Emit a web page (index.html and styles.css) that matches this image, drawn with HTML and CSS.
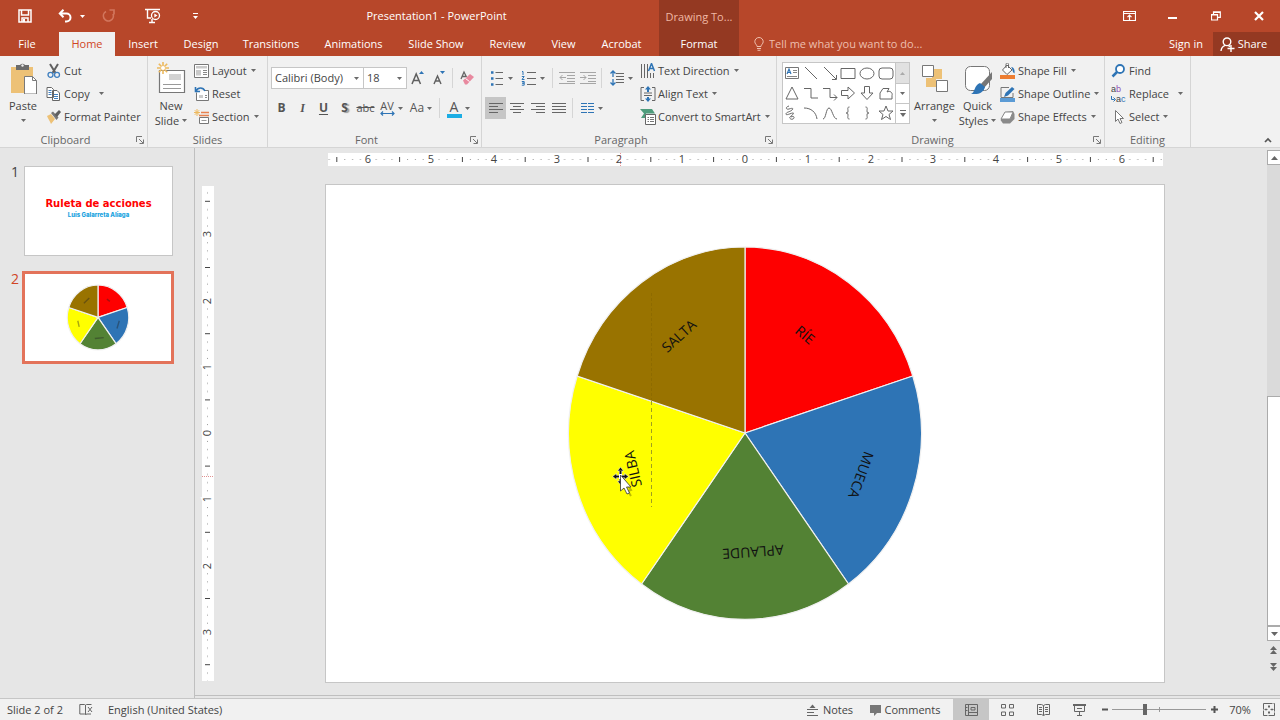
FILE: index.html
```html
<!DOCTYPE html>
<html lang="en">
<head>
<meta charset="utf-8">
<title>Presentation1 - PowerPoint</title>
<link rel="stylesheet" href="styles.css">
</head>
<body>
<svg class="defs" aria-hidden="true">
  <defs>
    <symbol id="caret" viewBox="0 0 5 3"><path d="M0 0h5L2.500 3z" fill="#6a6a6a"/></symbol>
    <symbol id="launch" viewBox="0 0 8 8"><path d="M.5 6V.5H6M3 3l4 4M7.500 3.500v4h-4" fill="none" stroke="#777"/></symbol>
    <g id="wheel" stroke="#f0f0f0" stroke-width="1.200">
      <path vector-effect="non-scaling-stroke" d="M745 433V247A176.500 186 0 0 1 912.800 376z" fill="#fe0000"/>
      <path vector-effect="non-scaling-stroke" d="M745 433L912.800 376A176.500 186 0 0 1 848.500 584z" fill="#2e74b5"/>
      <path vector-effect="non-scaling-stroke" d="M745 433L848.500 584A176.500 186 0 0 1 641.500 584z" fill="#538234"/>
      <path vector-effect="non-scaling-stroke" d="M745 433L641.500 584A176.500 186 0 0 1 577.200 376z" fill="#ffff00"/>
      <path vector-effect="non-scaling-stroke" d="M745 433L577.200 376A176.500 186 0 0 1 745 247z" fill="#997300"/>
    </g>
  </defs>
</svg>

<header class="top">
  <div class="titlebar">
    <div class="qat">
      <button class="tb" aria-label="Save"><svg width="14" height="14" viewBox="0 0 14 14"><path d="M1 1h12v12H1zM3.500 1v5h7V1M4 13V9h6v4" fill="none" stroke="#fff" stroke-width="1.500"/><path d="M5 10h2v3H5z" fill="#fff"/></svg></button>
      <button class="tb undo" aria-label="Undo"><svg width="14" height="14" viewBox="0 0 14 14"><path d="M2 4.500h6.500a4 4 0 0 1 0 8H7M5.500.8L1.800 4.500l3.700 3.700" fill="none" stroke="#fff" stroke-width="2"/></svg><svg width="5" height="3" viewBox="0 0 5 3"><path d="M0 0h5L2.500 3z" fill="#fff"/></svg></button>
      <button class="tb redo" aria-label="Redo"><svg width="14" height="14" viewBox="0 0 14 14"><path d="M4 2.500A5 5 0 1 0 11 5M7.500 1H12v4.500" fill="none" stroke="#d2765d" stroke-width="1.700"/></svg></button>
      <button class="tb show" aria-label="Start from beginning"><svg width="16" height="16" viewBox="0 0 16 16"><path d="M0 1.500h15M2.500 2v8H6M7 11v3M4 14.500h6" fill="none" stroke="#fff" stroke-width="1.400"/><circle cx="10.500" cy="7.500" r="4" fill="#b7472a" stroke="#fff" stroke-width="1.300"/><path d="M9.300 5.400v4.200l3.200-2.100z" fill="#fff"/></svg></button>
      <button class="tb more" aria-label="Customize"><svg width="5" height="6" viewBox="0 0 5 6"><path d="M0 0h5v1H0zM0 3h5L2.500 6z" fill="#fff"/></svg></button>
    </div>
    <h1 class="doc">Presentation1 - PowerPoint</h1>
    <div class="context">Drawing To...</div>
    <span></span>
    <div class="win">
      <button class="tb" aria-label="Ribbon options"><svg width="13" height="11" viewBox="0 0 13 11"><path d="M.5.500h12v9H.5zM.5 2.500h12M6.500 9V4.500M4.500 6.200l2-2 2 2" fill="none" stroke="#fff" stroke-width="1.200"/></svg></button>
      <button class="tb" aria-label="Minimize"><svg width="9" height="9" viewBox="0 0 9 9"><path d="M0 5h9v2H0z" fill="#fff"/></svg></button>
      <button class="tb" aria-label="Restore"><svg width="10" height="10" viewBox="0 0 10 10"><path d="M.5 3.500h6v5.500h-6zM.5 4h6M2.500 3V.8h6.800v5.500H7M2.500 1.500h7" fill="none" stroke="#fff" stroke-width="1.200"/></svg></button>
      <button class="tb" aria-label="Close"><svg width="10" height="10" viewBox="0 0 10 10"><path d="M1 1l8 8M9 1L1 9" stroke="#fff" stroke-width="2.200"/></svg></button>
    </div>
  </div>
  <nav class="tabs">
    <button>File</button><button class="active">Home</button><button>Insert</button><button>Design</button><button>Transitions</button><button>Animations</button><button>Slide Show</button><button>Review</button><button>View</button><button>Acrobat</button><span></span><button class="fmt">Format</button>
    <label class="tell"><svg width="10" height="14" viewBox="0 0 10 14"><path d="M3 9.500C3 7.500.8 7 .8 4.700a4.200 4.200 0 0 1 8.400 0C9.200 7 7 7.500 7 9.500zM3 11.500h4M3.500 13.300h3" fill="none" stroke="#eebfae"/></svg><input type="text" placeholder="Tell me what you want to do..." aria-label="Tell me what you want to do"></label>
    <button class="signin">Sign in</button>
    <button class="share"><svg width="15" height="15" viewBox="0 0 15 15"><circle cx="7" cy="4.800" r="3.800" fill="none" stroke="#fff" stroke-width="1.400"/><path d="M1 14c.3-2.800 1.800-4.800 4.200-5.600M8.500 8.600l1.500 1M7.500 11.500h7M11 8v7" fill="none" stroke="#fff" stroke-width="1.400"/></svg>Share</button>
  </nav>
</header>

<section class="ribbon">
  <div class="group clipboard">
    <div class="body">
      <button class="big"><svg width="30" height="32" viewBox="0 0 30 32"><path d="M3 5h22v26H3z" fill="#edc176"/><path d="M8 3h4a3 3 0 0 1 5 0h4v5H8z" fill="#6b6b6b"/><circle cx="14.500" cy="3.500" r="1.200" fill="#f1f1f1"/><path d="M16.500 14.500h8l4 4V32h-12z" fill="#fff" stroke="#7a7a7a"/><path d="M24.500 14.500v4h4" fill="none" stroke="#7a7a7a"/></svg><span>Paste</span><svg class="caret"><use href="#caret"/></svg></button>
      <div class="col">
        <button class="row"><svg width="16" height="16" viewBox="0 0 16 16"><path d="M4 1l5.500 9M12 1L6.500 10" stroke="#606060" stroke-width="2" fill="none"/><circle cx="4.500" cy="11.800" r="2.500" fill="none" stroke="#3f7fbf" stroke-width="1.300"/><circle cx="11" cy="11.800" r="2.500" fill="none" stroke="#3f7fbf" stroke-width="1.300"/></svg>Cut</button>
        <button class="row"><svg width="16" height="16" viewBox="0 0 16 16"><path d="M1 1.500h4.500l2 2v8H1zM6.500 4.500H11l2.500 2.500v7.500h-7z" fill="#fff" stroke="#666"/><path d="M2.500 4.500h3M2.500 6.500h3M2.500 8.500h3M8 8.500h4M8 10.500h4M8 12.500h4" stroke="#3f7fbf"/></svg>Copy<svg class="caret far"><use href="#caret"/></svg></button>
        <button class="row"><svg width="16" height="16" viewBox="0 0 16 16"><path d="M1 7l4-2 4 5-4 5C4 12 2 10 1 7z" fill="#edc176"/><path d="M5 4l2-1.500 5.500 6L10.500 11z" fill="#777"/><path d="M8.500 5.500L13 1l2 2-4 5z" fill="#5f5f5f"/></svg>Format Painter</button>
      </div>
    </div>
    <div class="label">Clipboard</div><button class="launch" aria-label="Clipboard options"><svg width="8" height="8"><use href="#launch"/></svg></button>
  </div>

  <div class="group slides">
    <div class="body">
      <button class="big"><svg width="30" height="32" viewBox="0 0 30 32"><path d="M3.500 8.500h25v22h-25z" fill="#fff" stroke="#777" stroke-width="1.200"/><path d="M13 12h12v6H13z" fill="#d2d2d2"/><path d="M7 22.500h18M7 26.500h18" stroke="#999"/><path d="M7 0v12M1 6h12M2.800 1.800l8.400 8.400M11.200 1.800l-8.400 8.400" stroke="#edb95e" stroke-width="1.600"/><circle cx="7" cy="6" r="2" fill="#fff"/></svg><span>New</span><span>Slide<svg class="caret"><use href="#caret"/></svg></span></button>
      <div class="col">
        <button class="row"><svg width="16" height="16" viewBox="0 0 16 16"><path d="M.5 1.500h14v13H.5z" fill="#fff" stroke="#777"/><path d="M2 3h11v2.500H2zM2 7h5v5.500H2z" fill="#c9c9c9"/><path d="M9 7.500h4M9 9.500h4M9 11.500h4" stroke="#888"/></svg>Layout<svg class="caret"><use href="#caret"/></svg></button>
        <button class="row"><svg width="16" height="16" viewBox="0 0 16 16"><path d="M2.500 6.500V14.500h12v-10H10" fill="#fff" stroke="#777"/><path d="M5 9h4v3H5z" fill="#ccc"/><path d="M11 9.500h2M11 11.500h2" stroke="#888"/><path d="M2 5c2-4 7-4 9 0M1.500 1v4.500H6" fill="none" stroke="#2e74b5" stroke-width="1.600"/></svg>Reset</button>
        <button class="row"><svg width="16" height="16" viewBox="0 0 16 16"><path d="M7 3.500h8M5 6.500h10" stroke="#e8814e" stroke-width="1.500"/><path d="M5.500 8.500h9v6h-9z" fill="#fff" stroke="#777"/><path d="M7.500 11.500h5" stroke="#999"/><path d="M3 0v7M0 3.500h6M.8 1.200l4.400 4.600M5.200 1.200L.8 5.800" stroke="#edb95e"/></svg>Section<svg class="caret"><use href="#caret"/></svg></button>
      </div>
    </div>
    <div class="label">Slides</div>
  </div>

  <div class="group font">
    <div class="body lines">
      <div class="line">
        <div class="combo name"><select aria-label="Font"><option>Calibri (Body)</option></select><svg class="caret"><use href="#caret"/></svg></div>
        <div class="combo size"><select aria-label="Font size"><option>18</option></select><svg class="caret"><use href="#caret"/></svg></div>
        <button class="t" aria-label="Increase font size"><svg width="14" height="16" viewBox="0 0 14 16"><path d="M1 14L5.200 4 9.500 14M2.500 10.500h5.500" fill="none" stroke="#5f5f5f" stroke-width="1.500"/><path d="M8 4h5l-2.500-3z" fill="#2e74b5"/></svg></button>
        <button class="t" aria-label="Decrease font size"><svg width="14" height="16" viewBox="0 0 14 16"><path d="M2 14L5.500 6 9 14M3.200 11h4.600" fill="none" stroke="#5f5f5f" stroke-width="1.400"/><path d="M8 1h5l-2.500 3z" fill="#2e74b5"/></svg></button>
        <i class="sep"></i>
        <button class="t" aria-label="Clear formatting"><svg width="16" height="16" viewBox="0 0 16 16"><path d="M2 9L5 2l2.500 5M3 6.500h4" fill="none" stroke="#666" stroke-width="1.300"/><path d="M4 10.500L11 4l4 3-7 7.500H6z" fill="#e8899f"/><path d="M6.500 8.500l4 3" stroke="#fff"/></svg></button>
      </div>
      <div class="line">
        <button class="t b">B</button><button class="t i">I</button><button class="t u">U</button><button class="t s">S</button><button class="t abc">abc</button>
        <button class="t w"><span class="av">AV<svg width="15" height="5" viewBox="0 0 15 5"><path d="M1 2.500h13M3 .5l-2 2 2 2M12 .5l2 2-2 2" fill="none" stroke="#2e74b5" stroke-width="1.200"/></svg></span><svg class="caret"><use href="#caret"/></svg></button>
        <button class="t w aa">Aa<svg class="caret"><use href="#caret"/></svg></button>
        <i class="sep"></i>
        <button class="t w"><span class="fc">A</span><svg class="caret"><use href="#caret"/></svg></button>
      </div>
    </div>
    <div class="label">Font</div><button class="launch" aria-label="Font options"><svg width="8" height="8"><use href="#launch"/></svg></button>
  </div>

  <div class="group para">
    <div class="body">
      <div class="lines">
        <div class="line">
          <button class="t w" aria-label="Bullets"><svg width="14" height="16" viewBox="0 0 14 16"><path d="M5.500 2.500H13M5.500 8.500H13M5.500 14.500H13" stroke="#666"/><path d="M1 1.200h2.500v2.500H1zM1 7.200h2.500v2.500H1zM1 13.200h2.500v2.500H1z" fill="#2e74b5"/></svg><svg class="caret"><use href="#caret"/></svg></button>
          <button class="t w" aria-label="Numbering"><svg width="15" height="16" viewBox="0 0 15 16"><path d="M6 2.500h9M6 8.500h9M6 14.500h9" stroke="#666"/><path d="M1 1.500h1V5M.8 6.500h2.400L1 9.500h2.500M.8 11.500h2.400v1.700h-2 2v2H.8" fill="none" stroke="#2e74b5"/></svg><svg class="caret"><use href="#caret"/></svg></button>
          <i class="sep"></i>
          <button class="t" aria-label="Decrease indent"><svg width="16" height="14" viewBox="0 0 16 14"><path d="M0 1.500h16M8 4.500h8M8 7.500h8M8 10.500h8M0 12.500h16M1 6.500h6M3.500 4L1 6.500 3.500 9" fill="none" stroke="#a6a6a6"/></svg></button>
          <button class="t" aria-label="Increase indent"><svg width="16" height="14" viewBox="0 0 16 14"><path d="M0 1.500h16M8 4.500h8M8 7.500h8M8 10.500h8M0 12.500h16M0 6.500h6M3.500 4L6 6.500 3.500 9" fill="none" stroke="#a6a6a6"/></svg></button>
          <i class="sep"></i>
          <button class="t w" aria-label="Line spacing"><svg width="14" height="16" viewBox="0 0 14 16"><path d="M6 3.500h8M6 6.500h8M6 9.500h8M6 12.500h8" stroke="#666"/><path d="M3 1v6M.5 3.500L3 1l2.500 2.500M3 9v6M.5 12.500L3 15l2.500-2.500" fill="none" stroke="#2e74b5" stroke-width="1.300"/></svg><svg class="caret"><use href="#caret"/></svg></button>
        </div>
        <div class="line">
          <button class="t on" aria-label="Align left"><svg width="14" height="12" viewBox="0 0 14 12"><path d="M0 1.500h14M0 4.500h9M0 7.500h14M0 10.500h9" stroke="#666"/></svg></button>
          <button class="t" aria-label="Center"><svg width="14" height="12" viewBox="0 0 14 12"><path d="M0 1.500h14M3 4.500h8M0 7.500h14M3 10.500h8" stroke="#666"/></svg></button>
          <button class="t" aria-label="Align right"><svg width="14" height="12" viewBox="0 0 14 12"><path d="M0 1.500h14M5 4.500h9M0 7.500h14M5 10.500h9" stroke="#666"/></svg></button>
          <button class="t" aria-label="Justify"><svg width="14" height="12" viewBox="0 0 14 12"><path d="M0 1.500h14M0 4.500h14M0 7.500h14M0 10.500h14" stroke="#666"/></svg></button>
          <i class="sep"></i>
          <button class="t w" aria-label="Columns"><svg width="13" height="12" viewBox="0 0 13 12"><path d="M0 1.500h6M0 4.500h6M0 7.500h6M0 10.500h6M7 1.500h6M7 4.500h6M7 7.500h6M7 10.500h6" stroke="#2e74b5"/></svg><svg class="caret"><use href="#caret"/></svg></button>
        </div>
      </div>
      <div class="col">
        <button class="row"><svg width="16" height="16" viewBox="0 0 16 16"><path d="M1.500 1v14M4.500 1v14M7.500 1v14M7.500 10v5M10.500 10v5M13.500 10v5" stroke="#666"/><path d="M8.500 8l3-7.500 3 7.500M9.500 5.500h4" fill="none" stroke="#2e74b5" stroke-width="1.500"/></svg>Text Direction<svg class="caret"><use href="#caret"/></svg></button>
        <button class="row"><svg width="16" height="16" viewBox="0 0 16 16"><path d="M4 1.500H1v13h3M12 1.500h3v13h-3M4 7h8M4 9.500h8" fill="none" stroke="#666"/><path d="M8 0l3 3.500H9V6H7V3.500H5zM8 16l3-3.500H9V11H7v1.500H5z" fill="#2e74b5"/></svg>Align Text<svg class="caret"><use href="#caret"/></svg></button>
        <button class="row"><svg width="16" height="16" viewBox="0 0 16 16"><path d="M0 0h12l3 4.500h-9V9H1l3-4.500z" fill="#4f9c7c"/><path d="M5.500 5.500h10v10h-10z" fill="#fff" stroke="#666"/><path d="M7.500 8.500h1.500M10 8.500h4M7.500 10.500h1.500M10 10.500h4M7.500 12.500h1.500M10 12.500h4" stroke="#777"/></svg>Convert to SmartArt<svg class="caret"><use href="#caret"/></svg></button>
      </div>
    </div>
    <div class="label">Paragraph</div><button class="launch" aria-label="Paragraph options"><svg width="8" height="8"><use href="#launch"/></svg></button>
  </div>

  <div class="group draw">
    <div class="body">
      <div class="gallery">
        <div class="shapes">
          <svg viewBox="0 0 16 16"><path d="M1.500 2.500h13v11h-13z" fill="#fff" stroke="#777"/><path d="M3 9l2-5 2 5M3.500 7.500h3" fill="none" stroke="#2e74b5" stroke-width="1.200"/><path d="M9 5.500h4M9 7.500h4M3 11.500h10" stroke="#888"/></svg>
          <svg viewBox="0 0 16 16"><path d="M2 2l12 12"/></svg>
          <svg viewBox="0 0 16 16"><path d="M2 2l12 12M14.500 10v4.500H10"/></svg>
          <svg viewBox="0 0 16 16"><path d="M1 3.500h14v10H1z"/></svg>
          <svg viewBox="0 0 16 16"><ellipse cx="8" cy="8.500" rx="7" ry="5.500"/></svg>
          <svg viewBox="0 0 16 16"><rect x="1" y="3" width="14" height="11" rx="3"/></svg>
          <svg viewBox="0 0 16 16"><path d="M8 2l6 12H2z"/></svg>
          <svg viewBox="0 0 16 16"><path d="M1 3.500h7v9.500h7"/></svg>
          <svg viewBox="0 0 16 16"><path d="M1 3.500h7v9h7M12 9.500l3 3-3 3"/></svg>
          <svg viewBox="0 0 16 16"><path d="M1.500 5.500H8V2l6.500 6L8 14v-3.500H1.500z"/></svg>
          <svg viewBox="0 0 16 16"><path d="M5.500 1.500h5V8H14l-6 6.500L2 8h3.500z"/></svg>
          <svg viewBox="0 0 16 16"><path d="M5 3.500h6L9 7c3-2 6 1 5 3.500v3.500H2V8z"/></svg>
          <svg viewBox="0 0 16 16"><path d="M5 1c-4 1-3 4 0 3s5-1 3 1-6 2-6 4 5-1 7-1-2 3-3 4 1 3 3 2 1-4-2-2"/></svg>
          <svg viewBox="0 0 16 16"><path d="M1 3c7 0 12 4 13 11"/></svg>
          <svg viewBox="0 0 16 16"><path d="M1 14C4 14 4 3 7 3s4 11 8 11"/></svg>
          <svg viewBox="0 0 16 16"><path d="M9.500 2C7 2 8 4 8 6s-1 2-2 2c1 0 2 0 2 2s-1 4 1.500 4"/></svg>
          <svg viewBox="0 0 16 16"><path d="M6.500 2C9 2 8 4 8 6s1 2 2 2c-1 0-2 0-2 2s1 4-1.500 4"/></svg>
          <svg viewBox="0 0 16 16"><path d="M8 1l2 5h5l-4 3.500 1.500 5L8 11.500l-4.500 3 1.500-5L1 6h5z"/></svg>
        </div>
        <div class="side"><button class="off" aria-label="Scroll up"><svg width="5" height="3" viewBox="0 0 5 3"><path d="M0 3h5L2.500 0z" fill="#aaa"/></svg></button><button aria-label="Scroll down"><svg class="caret"><use href="#caret"/></svg></button><button aria-label="More shapes"><svg width="6" height="7" viewBox="0 0 6 7"><path d="M0 0h6v1H0zM0 3h6L3 7z" fill="#6a6a6a"/></svg></button></div>
      </div>
      <button class="big"><svg width="30" height="32" viewBox="0 0 30 32"><path d="M12 7h10v10H12zM6 16h10v9H6z" fill="#edc176"/><path d="M2.500 3.500h11v11h-11zM16.500 18.500h11v11h-11z" fill="#fff" stroke="#777"/></svg><span>Arrange</span><svg class="caret"><use href="#caret"/></svg></button>
      <button class="big"><svg width="30" height="32" viewBox="0 0 30 32"><rect x="2.500" y="4.500" width="24" height="24" rx="5" fill="#fff" stroke="#777"/><path d="M29 10v7l-8 9-4-3z" fill="#777"/><path d="M17 21l5 4c-1 5-6 8-14 7 4-1 3-9 9-11z" fill="#2e74b5"/></svg><span>Quick</span><span>Styles<svg class="caret"><use href="#caret"/></svg></span></button>
      <div class="col">
        <button class="row"><svg width="16" height="16" viewBox="0 0 16 16"><path d="M7 2l5 5-5 4.500L2.500 7zM6 5V1.500C6-.5 8.500-.5 8.500 1.500V5" fill="#fff" stroke="#666"/><path d="M11 4c3 0 4 3 3.500 6.500C12 9 13 6 11 4z" fill="#2e74b5"/><path d="M0 12h15v4H0z" fill="#ed7d31"/></svg>Shape Fill<svg class="caret"><use href="#caret"/></svg></button>
        <button class="row"><svg width="16" height="16" viewBox="0 0 16 16"><path d="M9 1.500H1v10h12V7" fill="none" stroke="#777"/><path d="M12 1l2.500 2L8 9.500 4 11l1.500-4z" fill="#2e74b5"/><path d="M0 12h15v4H0z" fill="#5b9bd5"/></svg>Shape Outline<svg class="caret"><use href="#caret"/></svg></button>
        <button class="row"><svg width="16" height="16" viewBox="0 0 16 16"><path d="M5 3l8-1 1.500 3v5L10 14.500H3L.5 11z" fill="#8a8a8a"/><path d="M5 3h8l-3 7H1z" fill="#fff" stroke="#8a8a8a"/></svg>Shape Effects<svg class="caret"><use href="#caret"/></svg></button>
      </div>
    </div>
    <div class="label">Drawing</div><button class="launch" aria-label="Drawing options"><svg width="8" height="8"><use href="#launch"/></svg></button>
  </div>

  <div class="group edit">
    <div class="body">
      <div class="col">
        <button class="row"><svg width="16" height="16" viewBox="0 0 16 16"><circle cx="9" cy="6" r="4" fill="#fff" stroke="#2e74b5" stroke-width="1.800"/><path d="M6 9l-4.500 4.500" stroke="#2e74b5" stroke-width="2.500"/></svg>Find</button>
        <button class="row"><span class="ab"><span class="top-ab">a<b>b</b></span><span class="low-ac"><svg width="5" height="6" viewBox="0 0 5 6"><path d="M.5 0v3.500h3M2.500 1.500l2 2-2 2" fill="none" stroke="#2e74b5"/></svg>a<b>c</b></span></span>Replace<svg class="caret far"><use href="#caret"/></svg></button>
        <button class="row"><svg width="16" height="16" viewBox="0 0 16 16"><path d="M4.500 1.500v11L7 10l2 4.500 2-1L9 9.500h3.500z" fill="#fff" stroke="#777"/></svg>Select<svg class="caret"><use href="#caret"/></svg></button>
      </div>
    </div>
    <div class="label">Editing</div>
  </div>
  <button class="collapse" aria-label="Collapse ribbon"><svg width="8" height="6" viewBox="0 0 8 6"><path d="M1 5l3-3 3 3" fill="none" stroke="#555" stroke-width="1.700"/></svg></button>
</section>

<main class="work">
  <aside class="thumbs">
    <div class="thumb"><span class="num">1</span><div class="mini first"><strong>Ruleta de acciones</strong><small>Luis Galarreta Aliaga</small></div></div>
    <div class="thumb sel"><span class="num">2</span><div class="mini"><svg viewBox="326 185 838 497"><use href="#wheel"/><g stroke="#222" stroke-opacity=".4" stroke-width="8" fill="none"><path d="M664 351l31-30M796 328l17 13M867 452l-13 45M778 549l-51 5M637 487l-8-35"/></g></svg></div></div>
  </aside>
  <section class="editor">
    <svg class="hr" viewBox="328 153 835 13">
      <defs><pattern id="hp" patternUnits="userSpaceOnUse" x="745" y="153" width="62.800" height="13"><path d="M7.500 6h1v1h-1zM15.500 6h1v1h-1zM23.300 6h1v1h-1zM38.900 6h1v1h-1zM46.700 6h1v1h-1zM54.500 6h1v1h-1z" fill="#999"/><path d="M30.900 4h1v5h-1z" fill="#444"/></pattern></defs>
      <rect x="328" y="153" width="835" height="13" fill="#fff"/><rect x="328" y="153" width="835" height="13" fill="url(#hp)"/>
      <g class="rn"><text x="368" y="163">6</text><text x="431" y="163">5</text><text x="494" y="163">4</text><text x="557" y="163">3</text><text x="619" y="163">2</text><text x="682" y="163">1</text><text x="745" y="163">0</text><text x="808" y="163">1</text><text x="871" y="163">2</text><text x="933" y="163">3</text><text x="996" y="163">4</text><text x="1059" y="163">5</text><text x="1122" y="163">6</text></g>
      <path d="M620.500 153v13" stroke="#e05050" stroke-opacity=".6" stroke-dasharray="1 1"/>
    </svg>
    <svg class="vr" viewBox="202 186 13 495">
      <defs><pattern id="vp" patternUnits="userSpaceOnUse" x="202" y="433" width="13" height="66.200"><path d="M5 7.800h1v1H5zM5 16h1v1H5zM5 24.300h1v1H5zM5 40.900h1v1H5zM5 49.200h1v1H5zM5 57.400h1v1H5z" fill="#999"/><path d="M3 32.600h5v1H3z" fill="#444"/></pattern></defs>
      <rect x="202" y="186" width="12" height="495" fill="#fff"/><rect x="202" y="186" width="12" height="495" fill="url(#vp)"/>
      <path d="M202 476.500h12" stroke="#e09090" stroke-dasharray="1 1"/>
      <g class="rn"><text transform="translate(211 234) rotate(-90)">3</text><text transform="translate(211 301) rotate(-90)">2</text><text transform="translate(211 367) rotate(-90)">1</text><text transform="translate(211 433) rotate(-90)">0</text><text transform="translate(211 499) rotate(-90)">1</text><text transform="translate(211 566) rotate(-90)">2</text><text transform="translate(211 632) rotate(-90)">3</text></g>
    </svg>
    <div class="slide">
      <svg viewBox="326 185 838 497">
        <use href="#wheel"/>
        <path d="M651.500 293v107" stroke="#8e6b00" stroke-dasharray="3 2"/>
        <path d="M651.500 401v106" stroke="#a0a020" stroke-dasharray="4 3"/>
        <g class="wt">
          <text transform="translate(679 336) rotate(-42)" y="5">SALTA</text>
          <text transform="translate(805 335) rotate(40)" y="5">RÍE</text>
          <text transform="translate(861 475) rotate(110)" y="5">MUECA</text>
          <text transform="translate(753 552) rotate(176)" y="5">APLAUDE</text>
          <text transform="translate(633 469) rotate(-103)" y="5">SILBA</text>
        </g>
        <path d="M620.500 470v13M614 476.500h13" stroke="#fff" stroke-width="3"/>
        <path d="M620.500 467l3 4h-6zM620.500 485l3-4h-6zM612.500 476.500l4-3v6zM628.500 476.500l-4-3v6z" fill="#111" stroke="#fff" stroke-width=".5"/>
        <path d="M620.500 471v3M616 476.500h3M622 476.500h3M620.500 479v3" stroke="#111" stroke-width="2"/>
        <path d="M624 480l7 10-3 1 3 5" fill="none" stroke="#7a7a00" stroke-opacity=".5" stroke-width="2"/>
        <path d="M620.500 475v16l3.500-3 3 6 2.500-1-3-6h4.500z" fill="#fff" stroke="#333" stroke-width=".8"/>
      </svg>
    </div>
  </section>
  <div class="scroll">
    <button class="sb" aria-label="Up"><svg width="7" height="4" viewBox="0 0 7 4"><path d="M0 4h7L3.500 0z" fill="#666"/></svg></button>
    <div class="track"></div>
    <div class="handle"></div>
    <button class="sb" aria-label="Down"><svg width="7" height="4" viewBox="0 0 7 4"><path d="M0 0h7L3.500 4z" fill="#666"/></svg></button>
    <button class="pg" aria-label="Previous slide"><svg width="7" height="8" viewBox="0 0 7 8"><path d="M0 4h7L3.500 0zM0 8h7L3.500 4z" fill="#666"/></svg></button>
    <button class="pg" aria-label="Next slide"><svg width="7" height="8" viewBox="0 0 7 8"><path d="M0 0h7L3.500 4zM0 4h7L3.500 8z" fill="#666"/></svg></button>
  </div>
</main>

<footer class="status">
  <span class="count">Slide 2 of 2</span>
  <button aria-label="Spelling"><svg width="14" height="13" viewBox="0 0 14 13"><path d="M6.500 2v9.500L5.500 11H.8V1.500h4.700l1 .7 1-.7H9M6.500 11.500l1.500-.5h4M9 4l4 5M13 4L9 9M9 1.500h3.500" fill="none" stroke="#666"/></svg></button>
  <button class="lang">English (United States)</button>
  <div class="right">
    <button class="notes"><svg width="11" height="12" viewBox="0 0 11 12"><path d="M0 5.500h11M0 8.500h7M0 11.500h11" stroke="#666"/><path d="M2.500 4h6l-3-3.500z" fill="#666"/></svg>Notes</button>
    <button class="comments"><svg width="11" height="12" viewBox="0 0 11 12"><path d="M0 1h11v8H7l-3 3V9H0z" fill="#777"/></svg>Comments</button>
    <button class="view on" aria-label="Normal"><svg width="13" height="12" viewBox="0 0 13 12"><path d="M.5.500h12v11H.5zM3.500.500v11M3.500 8.500h9M6 3.500h4v2.500H6zM1 3.500h1.500M1 6.500h1.500" fill="none" stroke="#666"/></svg></button>
    <button class="view" aria-label="Slide sorter"><svg width="13" height="12" viewBox="0 0 13 12"><path d="M.5.500h4v3.500h-4zM8.500.500h4v3.500h-4zM.5 8h4v3.500h-4zM8.500 8h4v3.500h-4z" fill="none" stroke="#666"/></svg></button>
    <button class="view" aria-label="Reading view"><svg width="13" height="12" viewBox="0 0 13 12"><path d="M6.500 1.500v10M.5.500h4l2 1 2-1h4v10h-4l-2 1-2-1h-4zM2 3.500h3M2 5.500h3M2 7.500h3M8 3.500h3M8 5.500h3M8 7.500h3" fill="none" stroke="#666"/></svg></button>
    <button class="view" aria-label="Slide show"><svg width="13" height="12" viewBox="0 0 13 12"><path d="M0 1h13" stroke="#666" stroke-width="2"/><path d="M1.500 2v5.500h10V2M4 4.500h5M6.500 7.500v4M4 11.500h5" fill="none" stroke="#666"/></svg></button>
    <button class="zb" aria-label="Zoom out"><svg width="7" height="7" viewBox="0 0 7 7"><path d="M1 2.500h6v2H1z" fill="#555"/></svg></button>
    <input class="zoom" type="range" min="0" max="100" value="34" aria-label="Zoom">
    <button class="zb" aria-label="Zoom in"><svg width="7" height="7" viewBox="0 0 7 7"><path d="M0 2.500h7v2H0zM2.500 0h2v7h-2z" fill="#555"/></svg></button>
    <button class="pct">70%</button>
    <button class="fit" aria-label="Fit slide"><svg width="12" height="13" viewBox="0 0 12 13"><path d="M.5.500h11v12H.5z" fill="none" stroke="#666" stroke-dasharray="9 1"/><path d="M6 2v3M6 8v3M1.500 6.500h3M7.500 6.500h3M5 3.500h2M5 9.500h2M3 5.500v2M9 5.500v2" stroke="#666"/></svg></button>
  </div>
</footer>
</body>
</html>
```
FILE: styles.css
```css
* { box-sizing: border-box; }
body {
  margin: 0;
  min-height: 100vh;
  display: flex;
  flex-direction: column;
  background: #e6e6e6;
  color: #444;
  font: 11px/16px "Open Sans", "Noto Sans", sans-serif;
  overflow: hidden;
}
button, input, select { font: inherit; color: inherit; border: 0; padding: 0; margin: 0; background: none; }
button { display: flex; align-items: center; justify-content: center; white-space: nowrap; }
svg { display: block; flex: none; }
.defs { position: absolute; width: 0; height: 0; }
.caret { width: 5px; height: 3px; }

/* title bar and tabs */
.top { background: #b7472a; color: #fff; }
.titlebar { display: grid; grid-template-columns: 214px 445px 80px 1fr auto; height: 32px; align-items: center; }
.qat { display: flex; align-items: center; padding-left: 18px; height: 30px; }
.undo { margin-left: 26px; gap: 8px; }
.redo { margin-left: 17px; }
.show { margin-left: 29px; }
.more { margin-left: 32px; }
.doc { margin: 0; font-size: 11px; font-weight: 400; text-align: center; }
.context { background: #943922; height: 32px; line-height: 34px; text-align: center; color: #f0b8a4; }
.win { display: grid; grid-template-columns: repeat(4, 43px); height: 30px; }
.tabs {
  display: grid;
  grid-template-columns: 59px 56px 56px 60px 80px 85px 80px 63px 49px 67px 4px 80px 1fr 54px 67px;
  height: 24px;
}
.tabs > button:first-child { padding-right: 5px; }
.tabs .active { background: #f1f1f1; color: #d04525; }
.tabs .fmt { background: #943922; }
.tell { display: flex; align-items: center; gap: 5px; padding-left: 15px; }
.tell input { width: 200px; outline: 0; }
.tell input::placeholder { color: #eebfae; opacity: 1; }
.share { background: #943922; gap: 3px; padding-right: 6px; }

/* ribbon */
.ribbon { display: flex; height: 92px; background: #f1f1f1; border-bottom: 1px solid #d5d5d5; }
.group {
  display: grid;
  grid-template: 73px 16px / 1fr 14px;
  padding-top: 3px;
  border-right: 1px solid #d5d5d5;
}
.body { grid-column: 1 / 3; display: flex; }
.label { grid-column: 1 / 3; grid-row: 2; text-align: center; color: #666; }
.group .label { padding-right: 16px; }
.launch { grid-column: 2; grid-row: 2; }
.slides .label, .edit .label { padding-right: 0; }
.clipboard { width: 148px; }
.slides { width: 120px; }
.font { width: 214px; }
.para { width: 295px; }
.draw { width: 328px; }
.edit { width: 86px; }
.big { flex-direction: column; width: 46px; justify-content: flex-start; padding-top: 3px; }
.big span { display: flex; align-items: center; gap: 3px; line-height: 15px; }
.big > svg:first-child { margin-bottom: 4px; }
.big > .caret { margin-top: 6px; }
.col { display: grid; grid-template-rows: repeat(3, 23px); }
.row { justify-content: flex-start; gap: 2px; }
.row .caret { margin-left: 2px; }
.row .caret.far { margin-left: 7px; }
.lines { display: grid; grid-template-rows: 30px 30px; padding-top: 4px; align-content: start; }
.line { display: flex; align-items: center; }
.font .lines { padding-left: 3px; }
.combo { display: flex; align-items: center; height: 22px; background: #fff; border: 1px solid #c6c6c6; padding-right: 4px; }
.combo select { appearance: none; flex: 1; min-width: 0; padding-left: 3px; outline: 0; }
.combo.name { width: 93px; }
.combo.size { width: 43px; border-left: 0; }
.t { width: 21px; height: 22px; color: #555; }
.t.w { width: 32px; gap: 4px; }
.font .t.w { width: 30px; gap: 3px; }
.sep { width: 1px; height: 20px; background: #d5d5d5; margin: 0 3px; }
.b, .u, .s, .i { font-size: 12px; font-weight: 700; }
.i { font-family: "Liberation Serif", serif; font-style: italic; }
.u { text-decoration: underline; text-underline-offset: 2px; }
.s { text-shadow: 2px 1px 1px #999; }
.abc { text-decoration: line-through; }
.av { display: grid; line-height: 11px; font-size: 11px; justify-items: center; }
.aa { font-size: 12px; }
.fc { font-size: 14px; line-height: 15px; width: 15px; border-bottom: 4px solid #1cade4; }
.on { background: #c6c6c6; }
.para .lines { width: 158px; padding-left: 3px; }
.gallery { display: flex; width: 128px; height: 62px; margin: 3px 0 0 5px; border: 1px solid #c6c6c6; background: #fff; }
.shapes { flex: 1; display: grid; grid-template: repeat(3, 20px) / repeat(6, 1fr); place-items: center; }
.shapes svg { width: 16px; height: 16px; fill: none; stroke: #666; }
.side { width: 14px; display: grid; grid-template-rows: repeat(3, 20px); border-left: 1px solid #c6c6c6; }
.side button + button { border-top: 1px solid #c6c6c6; }
.side .off { background: #e1e1e1; }
.draw .big { width: 43px; }
.draw .big:nth-of-type(1) { margin-left: 3px; }
.draw .col { margin-left: 1px; }
.edit .body { padding-left: 6px; }
.ab { width: 16px; font: 9px/10px "Liberation Sans", sans-serif; }
.ab span { display: flex; align-items: center; }
.ab b { color: #9152b5; font-weight: 400; }
.low-ac b { color: #2e74b5; }
.collapse { margin: auto 8px 4px auto; }

/* workspace */
.work { flex: 1; display: grid; grid-template-columns: 195px 1fr 13px; }
.thumbs { border-right: 1px solid #bfbfbf; padding-top: 18px; }
.thumb { display: flex; gap: 5px; padding-left: 11px; margin-bottom: 15px; }
.num { width: 8px; font-size: 14px; line-height: 12px; }
.mini { width: 149px; height: 90px; background: #fff; border: 1px solid #c6c6c6; }
.first { display: grid; align-content: center; justify-items: center; padding-bottom: 4px; }
.first strong { font: 700 10px/12px "DejaVu Sans", sans-serif; color: #f00; white-space: nowrap; }
.first small { font: 800 6px/10px Inter, sans-serif; color: #1aa3e0; }
.sel { gap: 3px; }
.sel .num { color: #d04525; line-height: 16px; }
.sel .mini { width: 152px; height: 93px; border: 3px solid #e3735a; }
.sel .mini svg { width: 100%; height: 100%; }
.editor {
  display: grid;
  grid-template: 13px auto / 13px 1fr;
  align-content: start;
  gap: 18px 110px;
  padding: 5px 102px 0 7px;
  border-bottom: 1px solid #bfbfbf;
  margin-bottom: 2px;
}
.hr { grid-column: 2; margin: 0 2px 0 3px; overflow: visible; }
.vr { margin-top: 2px; height: 495px; width: 13px; overflow: visible; }
.rn { font-size: 11px; text-anchor: middle; fill: #444; }
.rn text { stroke: #fff; stroke-width: 3px; paint-order: stroke; }
.slide { background: #fff; border: 1px solid #c6c6c6; }
.slide svg { width: 100%; }
.wt { font-size: 14px; text-anchor: middle; fill: #111; }
.scroll { display: flex; flex-direction: column; padding: 2px 0 20px; margin-bottom: 2px; border-bottom: 1px solid #bfbfbf; }
.sb { height: 15px; background: #fff; border: 1px solid #ababab; border-right: 0; }
.track { flex: 1; background: #dadada; }
.handle { height: 230px; background: #fff; border: 1px solid #ababab; border-right: 0; }
.pg { height: 17px; }

/* status bar */
.status { display: flex; align-items: center; height: 22px; background: #f1f1f1; border-top: 1px solid #c6c6c6; padding: 0 5px 0 7px; }
.count { width: 72px; }
.lang { margin-left: 15px; }
.right { display: flex; align-items: center; margin-left: auto; height: 21px; }
.right button { height: 21px; }
.notes { gap: 5px; width: 52px; margin-right: 14px; }
.comments { gap: 4px; width: 70px; margin-right: 13px; }
.view { width: 36px; }
.zb { width: 14px; }
.zoom { appearance: none; width: 94px; height: 12px; margin: 0 1px; background: linear-gradient(#999, #999) center / 100% 1px no-repeat, linear-gradient(#999, #999) center / 1px 5px no-repeat; }
.zoom::-webkit-slider-thumb { appearance: none; width: 4px; height: 11px; background: #666; }
.right .pct { width: 38px; }
.right .fit { margin-left: 4px; }
```
